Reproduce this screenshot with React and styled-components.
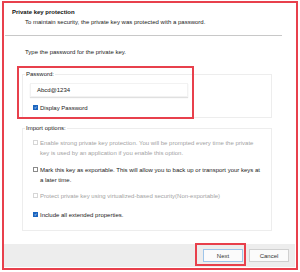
import React from 'react';
import styled, { createGlobalStyle } from 'styled-components';

const Global = createGlobalStyle`
  body {
    margin: 0;
    background: #ffffff;
    font-family: "Liberation Sans", Arial, sans-serif;
    color: #222;
  }
`;

const Frame = styled.div`
  position: relative;
  box-sizing: border-box;
  margin: 1px 2px;
  width: 296px;
  height: 269px;
  border: 2px solid #e8404c;
  display: flex;
  flex-direction: column;
  font-size: 6px;
  line-height: 10px;
`;

const Header = styled.div`
  padding: 4px 0 0 8px;
`;

const Title = styled.div`
  font-weight: bold;
  color: #111;
`;

const Subtitle = styled.div`
  padding-left: 13px;
  color: #222;
`;

const Separator = styled.div`
  margin: 8px 0 0 1px;
  width: 277px;
  height: 1px;
  background: #c8c8c8;
`;

const Body = styled.div`
  padding: 0 24px 0 18px;
`;

const Prompt = styled.div`
  margin: 11px 0 0 3px;
`;

const Group = styled.fieldset`
  margin: ${p => p.$top}px 0 0 0;
  padding: 0 0 ${p => p.$bottom}px 0;
  border: 1px solid #ededed;
  min-width: 0;
`;

const Legend = styled.legend`
  margin-left: 2px;
  padding: 0 1px;
  line-height: 10px;
  color: #222;
`;

const Input = styled.div`
  box-sizing: border-box;
  margin: 4px 0 0 7px;
  width: 158px;
  height: 14px;
  padding-left: 6px;
  background: #fff;
  border: 1px solid #f2f2f2;
  box-shadow: 0 1px 1px rgba(0, 0, 0, 0.12);
  display: flex;
  align-items: center;
  color: #222;
`;

const Check = styled.label`
  display: flex;
  align-items: flex-start;
  gap: 2px;
  margin: ${p => p.$top}px 0 0 10px;
  padding-right: 8px;
  color: ${p => (p.$disabled ? '#a3a3a3' : '#222')};
`;

const Box = styled.span`
  flex: none;
  box-sizing: border-box;
  width: 5px;
  height: 5px;
  margin-top: 2px;
  display: flex;
  border: 1px solid ${p => (p.$checked ? '#1a65c0' : p.$disabled ? '#d6d6d6' : '#8a8a8a')};
  background: ${p => (p.$checked ? '#1a65c0' : '#fff')};
`;

const Tick = () => (
  <svg width="3" height="3" viewBox="0 0 3 3">
    <path d="M0.4 1.6 L1.2 2.4 L2.6 0.6" fill="none" stroke="#fff" strokeWidth="0.6" />
  </svg>
);

const Footer = styled.div`
  margin: auto 1px 1px 0;
  height: 23px;
  background: #ededed;
  display: flex;
  justify-content: flex-end;
  align-items: center;
  gap: 6px;
  padding-right: 6px;
`;

const Button = styled.div`
  box-sizing: border-box;
  width: 40px;
  height: 13px;
  display: flex;
  align-items: center;
  justify-content: center;
  background: #fbfbfb;
  border: 1px solid ${p => (p.$primary ? '#9ec5ea' : '#d0d0d0')};
  color: #333;
`;

const Highlight = styled.div`
  position: absolute;
  box-sizing: border-box;
  border: 2px solid #e8404c;
`;

const options = [
  {
    text: 'Enable strong private key protection. You will be prompted every time the private key is used by an application if you enable this option.',
    disabled: true,
    top: 5,
  },
  {
    text: 'Mark this key as exportable. This will allow you to back up or transport your keys at a later time.',
    top: 7,
  },
  {
    text: 'Protect private key using virtualized-based security(Non-exportable)',
    disabled: true,
    top: 6,
  },
  {
    text: 'Include all extended properties.',
    checked: true,
    top: 9,
  },
];

export default function App() {
  return (
    <>
      <Global />
      <Frame>
        <Header>
          <Title>Private key protection</Title>
          <Subtitle>To maintain security, the private key was protected with a password.</Subtitle>
        </Header>
        <Separator />
        <Body>
          <Prompt>Type the password for the private key.</Prompt>
          <Group $top={12} $bottom={4}>
            <Legend>Password:</Legend>
            <Input>Abcd@1234</Input>
            <Check $top={6}>
              <Box $checked>
                <Tick />
              </Box>
              Display Password
            </Check>
          </Group>
          <Group $top={5} $bottom={10}>
            <Legend>Import options:</Legend>
            {options.map(o => (
              <Check key={o.text} $top={o.top} $disabled={o.disabled}>
                <Box $checked={o.checked} $disabled={o.disabled}>
                  {o.checked && <Tick />}
                </Box>
                <span>{o.text}</span>
              </Check>
            ))}
          </Group>
        </Body>
        <Footer>
          <Button $primary>Next</Button>
          <Button>Cancel</Button>
        </Footer>
        <Highlight style={{ left: 13, top: 63, width: 177, height: 53 }} />
        <Highlight style={{ left: 191, top: 240, width: 51, height: 23 }} />
      </Frame>
    </>
  );
}
